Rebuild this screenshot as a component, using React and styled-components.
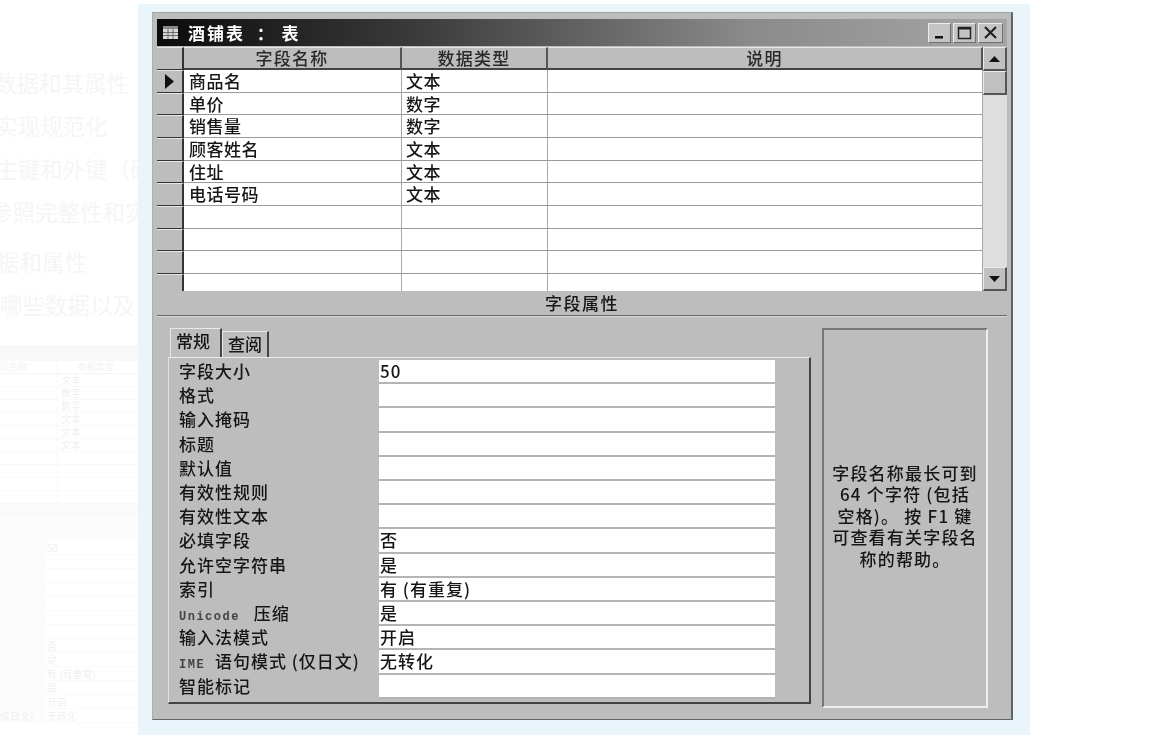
import React from 'react';
import styled, { createGlobalStyle } from 'styled-components';

const cjk = '"Noto Sans CJK SC", "Liberation Sans", sans-serif';

const GlobalStyle = createGlobalStyle`
  html, body {
    margin: 0;
    padding: 0;
    background: #fff;
  }
  * {
    box-sizing: border-box;
  }
`;

const Page = styled.div`
  display: flex;
  width: 1168px;
  height: 737px;
  overflow: hidden;
  font-family: ${cjk};
`;

/* faded page showing through on the left */
const Ghost = styled.div`
  width: 138px;
  height: 737px;
  flex: none;
  overflow: hidden;
  padding-top: 61px;
  color: #f6f5f5;
`;

const GhostLine = styled.div`
  height: 43px;
  margin-top: ${props => props.$gap || 0}px;
  margin-left: ${props => props.$shift}px;
  font-size: 22.5px;
  line-height: 43px;
  white-space: nowrap;
`;

const GhostBand = styled.div`
  height: 16px;
  margin-top: 19px;
  background: #f8f8f8;
`;

const GhostHeader = styled.div`
  display: grid;
  grid-template-columns: 58px 80px;
  height: 13px;
  font-size: 9px;
  line-height: 12px;
  color: #f2f2f2;
  border-bottom: 1px solid #f5f5f5;
  white-space: nowrap;
  overflow: hidden;
  & > span:first-child {
    border-right: 1px solid #f5f5f5;
  }
  & > span:last-child {
    padding-left: 20px;
  }
`;

const GhostRow = styled.div`
  display: grid;
  grid-template-columns: 58px 80px;
  height: 13px;
  font-size: 10px;
  line-height: 12px;
  color: #f0f0f0;
  border-bottom: 1px solid #f9f9f9;
  overflow: hidden;
  & > span:first-child {
    border-right: 1px solid #f9f9f9;
  }
  & > span:last-child {
    padding-left: 3px;
  }
`;

const GhostGap = styled.div`
  height: 37px;
  background: linear-gradient(#fafafa 0 12px, #fcfcfc 12px);
`;

const GhostProp = styled.div`
  display: grid;
  grid-template-columns: 46px 92px;
  height: 14px;
  font-size: 10px;
  line-height: 13px;
  color: #f0f0f0;
  background: #fcfcfc;
  white-space: nowrap;
  overflow: hidden;
  & > span:last-child {
    background: #fff;
    border-bottom: 1px solid #fafafa;
    padding-left: 1px;
  }
`;

const Frame = styled.div`
  width: 892px;
  height: 731px;
  margin-top: 4px;
  flex: none;
  padding: 8px 17px 15px 14px;
  background: #e9f5fb;
`;

const Window = styled.div`
  height: 708px;
  padding: 6px 4px 0 4px;
  background: #bdbdbd;
  border-top: 1px solid #9ea3a3;
  border-left: 1px solid #a9adad;
  border-right: 2px solid #5d6468;
  border-bottom: 1px solid #5f6568;
  color: #161616;
  filter: blur(0.45px);
`;

const TitleBar = styled.div`
  display: flex;
  align-items: center;
  height: 27px;
  margin-bottom: 1px;
  padding: 0 4px 0 6px;
  background: linear-gradient(to right, #0b0b0b 0%, #3a3a3a 30%, #8b8b8b 70%, #a6a6a6 100%);
`;

const TitleText = styled.span`
  flex: 1;
  margin-left: 10px;
  font-size: 17px;
  font-weight: 700;
  letter-spacing: 2px;
  color: #fff;
  white-space: pre;
`;

const ControlButton = styled.div`
  display: flex;
  align-items: center;
  justify-content: center;
  width: ${props => props.$width}px;
  height: 20px;
  margin-left: 2px;
  background: #c4c4c4;
  border-top: 1px solid #ececec;
  border-left: 1px solid #ececec;
  border-right: 1px solid #707070;
  border-bottom: 1px solid #707070;
`;

const TableArea = styled.div`
  display: flex;
  height: 244px;
  overflow: hidden;
`;

const Table = styled.div`
  width: 826px;
  flex: none;
`;

const TableRow = styled.div`
  display: grid;
  grid-template-columns: 27px 218px 146px 435px;
  grid-template-rows: ${props => props.$height}px;
`;

const Selector = styled.div`
  display: flex;
  align-items: center;
  justify-content: center;
  background: #bdbdbd;
  border-top: 1px solid #e6e6e6;
  border-right: 2px solid #333;
  border-bottom: 1px solid #333;
`;

const HeadCell = styled.div`
  background: #bdbdbd;
  border-top: 1px solid #e6e6e6;
  border-right: 2px solid #555;
  border-bottom: 2px solid #444;
  font-size: 17px;
  font-weight: 500;
  line-height: 20px;
  letter-spacing: 1.2px;
  text-align: center;
  color: #2a2a2a;
`;

const Cell = styled.div`
  background: #fff;
  border-right: 1px solid #a8a8a8;
  border-bottom: 1px solid #9a9a9a;
  padding-left: ${props => props.$pad}px;
  font-size: 17px;
  font-weight: 500;
  line-height: 21px;
  letter-spacing: 0.5px;
  white-space: nowrap;
  overflow: hidden;
`;

const Scrollbar = styled.div`
  display: flex;
  flex-direction: column;
  width: 24px;
  flex: none;
  background: #dedede;
`;

const ScrollButton = styled.div`
  display: flex;
  align-items: center;
  justify-content: center;
  height: ${props => props.$height}px;
  flex: none;
  background: #c0c0c0;
  border-top: 1px solid #ececec;
  border-left: 1px solid #ececec;
  border-right: 2px solid #555;
  border-bottom: 2px solid #555;
`;

const ScrollTrack = styled.div`
  flex: 1;
`;

const Band = styled.div`
  height: 25px;
  border-bottom: 1px solid #666;
  box-shadow: 0 1px 0 #d8d8d8;
  font-size: 17px;
  font-weight: 500;
  line-height: 24px;
  letter-spacing: 1.5px;
  text-align: center;
`;

const Lower = styled.div`
  display: flex;
  gap: 11px;
  padding: 12px 0 0 11px;
`;

const TabPane = styled.div`
  width: 643px;
  flex: none;
`;

const Tabs = styled.div`
  display: flex;
  align-items: flex-end;
  height: 29px;
  padding-left: 2px;
`;

const Tab = styled.div`
  width: ${props => props.$width}px;
  height: ${props => (props.$active ? 29 : 26)}px;
  padding-left: 5px;
  border-top: 1px solid #e8e8e8;
  border-left: 1px solid #e8e8e8;
  border-right: 2px solid #444;
  font-size: 17px;
  font-weight: 500;
  line-height: 24px;
`;

const Panel = styled.div`
  height: 347px;
  padding: 2px 0 0 2px;
  border-top: 1px solid #ececec;
  border-left: 1px solid #e0e0e0;
  border-right: 2px solid #444;
  border-bottom: 2px solid #444;
`;

const PropRow = styled.div`
  display: grid;
  grid-template-columns: 208px 396px;
  grid-template-rows: ${props => props.$height}px;
`;

const PropLabel = styled.div`
  padding-left: 8px;
  font-size: 17px;
  font-weight: 500;
  line-height: 21px;
  letter-spacing: 1px;
  white-space: nowrap;
`;

const PropValue = styled.div`
  background: #fff;
  border-bottom: 2px solid #b4b4b4;
  padding-left: 1px;
  font-size: 17px;
  font-weight: 500;
  line-height: 21px;
  letter-spacing: 1px;
  white-space: nowrap;
  overflow: hidden;
`;

const Mono = styled.span`
  margin-right: ${props => props.$gap}px;
  font-family: "Liberation Mono", monospace;
  font-size: 12px;
  font-weight: 700;
  letter-spacing: 1.5px;
  color: #444;
`;

const HelpBox = styled.div`
  display: flex;
  align-items: center;
  justify-content: center;
  width: 166px;
  height: 380px;
  flex: none;
  padding-bottom: 5px;
  border-top: 2px solid #777;
  border-left: 2px solid #777;
  border-right: 2px solid #eee;
  border-bottom: 2px solid #eee;
  font-size: 17px;
  font-weight: 500;
  line-height: 21.5px;
  letter-spacing: 1.2px;
  text-align: center;
  white-space: pre;
`;

const ghostLines = [
  { text: '数据和其属性', shift: -6 },
  { text: '实现规范化', shift: -5 },
  { text: '主键和外键（确', shift: -5 },
  { text: '参照完整性和实', shift: -10 },
  { text: '据和属性', shift: -3, gap: 7 },
  { text: '哪些数据以及', shift: 0 },
];

const ghostRows = ['文本', '数字', '数字', '文本', '文本', '文本', '', '', '', ''];
const ghostProps = ['50', '', '', '', '', '', '', '否', '是', '有 (有重复)', '是', '开启', '无转化'];

const fields = [
  ['商品名', '文本'],
  ['单价', '数字'],
  ['销售量', '数字'],
  ['顾客姓名', '文本'],
  ['住址', '文本'],
  ['电话号码', '文本'],
  ['', ''],
  ['', ''],
  ['', ''],
  ['', ''],
];

const properties = [
  ['字段大小', '50'],
  ['格式', ''],
  ['输入掩码', ''],
  ['标题', ''],
  ['默认值', ''],
  ['有效性规则', ''],
  ['有效性文本', ''],
  ['必填字段', '否'],
  ['允许空字符串', '是'],
  ['索引', '有 (有重复)'],
  [<><Mono $gap={9}>Unicode</Mono> 压缩</>, '是'],
  ['输入法模式', '开启'],
  [<><Mono $gap={5}>IME</Mono> 语句模式 (仅日文)</>, '无转化'],
  ['智能标记', ''],
];

const helpText = '字段名称最长可到\n64 个字符 (包括\n空格)。 按 F1 键\n可查看有关字段名\n称的帮助。';

// whole-pixel row heights, so every divider lands on a pixel
const stepHeight = (i, pitch) => Math.round((i + 1) * pitch) - Math.round(i * pitch);

const TableIcon = () => (
  <svg width="15" height="13" viewBox="0 0 15 13">
    <rect width="15" height="13" fill="#d8d8d8" />
    <rect y="0" width="15" height="3" fill="#8a8a8a" />
    <path d="M5 3v10M10 3v10M0 6.5h15M0 9.5h15" stroke="#6a6a6a" strokeWidth="1" />
  </svg>
);

const MinIcon = () => (
  <svg width="13" height="12" viewBox="0 0 13 12">
    <rect x="2" y="9" width="8" height="2.5" fill="#111" />
  </svg>
);

const MaxIcon = () => (
  <svg width="15" height="14" viewBox="0 0 15 14">
    <rect x="1.5" y="1.5" width="12" height="11" fill="none" stroke="#222" strokeWidth="1.5" />
    <rect x="1" y="1" width="13" height="2.5" fill="#222" />
  </svg>
);

const CloseIcon = () => (
  <svg width="15" height="13" viewBox="0 0 15 13">
    <path d="M2 1l11 11M13 1L2 12" stroke="#222" strokeWidth="2.2" />
  </svg>
);

const Arrow = ({ down }) => (
  <svg width="11" height="6" viewBox="0 0 11 6">
    <path d={down ? 'M0 0h11L5.5 6z' : 'M0 6h11L5.5 0z'} fill="#111" />
  </svg>
);

const RowPointer = () => (
  <svg width="9" height="15" viewBox="0 0 9 15">
    <path d="M0 0l9 7.5L0 15z" fill="#111" />
  </svg>
);

const App = () => (
  <Page>
    <GlobalStyle />
    <Ghost>
      {ghostLines.map((line) => (
        <GhostLine key={line.text} $shift={line.shift} $gap={line.gap}>{line.text}</GhostLine>
      ))}
      <GhostBand />
      <GhostHeader><span>段名称</span><span>数据类型</span></GhostHeader>
      {ghostRows.map((text, i) => (
        <GhostRow key={i}><span /><span>{text}</span></GhostRow>
      ))}
      <GhostGap />
      {ghostProps.map((text, i) => (
        <GhostProp key={i}><span>{i === 12 ? '仅日文)' : ''}</span><span>{text}</span></GhostProp>
      ))}
    </Ghost>
    <Frame>
      <Window>
        <TitleBar>
          <TableIcon />
          <TitleText>酒铺表  ： 表</TitleText>
          <ControlButton $width={23}><MinIcon /></ControlButton>
          <ControlButton $width={23}><MaxIcon /></ControlButton>
          <ControlButton $width={25}><CloseIcon /></ControlButton>
        </TitleBar>
        <TableArea>
          <Table>
            <TableRow $height={23}>
              <Selector />
              <HeadCell>字段名称</HeadCell>
              <HeadCell>数据类型</HeadCell>
              <HeadCell>说明</HeadCell>
            </TableRow>
            {fields.map(([name, type], i) => (
              <TableRow key={i} $height={stepHeight(i, 22.67)}>
                <Selector>{i === 0 && <RowPointer />}</Selector>
                <Cell $pad={5}>{name}</Cell>
                <Cell $pad={4}>{type}</Cell>
                <Cell />
              </TableRow>
            ))}
          </Table>
          <Scrollbar>
            <ScrollButton $height={24}><Arrow /></ScrollButton>
            <ScrollButton $height={24} />
            <ScrollTrack />
            <ScrollButton $height={24}><Arrow down /></ScrollButton>
          </Scrollbar>
        </TableArea>
        <Band>字段属性</Band>
        <Lower>
          <TabPane>
            <Tabs>
              <Tab $active $width={52}>常规</Tab>
              <Tab $width={47}>查阅</Tab>
            </Tabs>
            <Panel>
              {properties.map(([label, value], i) => (
                <PropRow key={i} $height={stepHeight(i, 24.2)}>
                  <PropLabel>{label}</PropLabel>
                  <PropValue>{value}</PropValue>
                </PropRow>
              ))}
            </Panel>
          </TabPane>
          <HelpBox>{helpText}</HelpBox>
        </Lower>
      </Window>
    </Frame>
  </Page>
);

export default App;
